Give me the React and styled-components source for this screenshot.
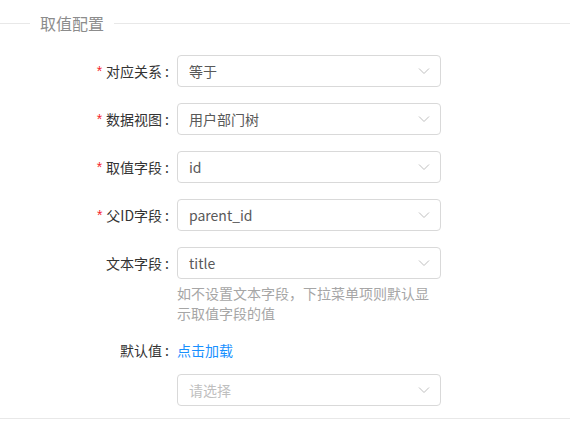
import React from "react";
import styled, { createGlobalStyle } from "styled-components";

const GlobalStyle = createGlobalStyle`
  body {
    margin: 0;
    background: #ffffff;
    font-family: "Liberation Sans", "Noto Sans CJK SC", sans-serif;
    font-size: 14px;
    color: #333;
  }
`;

const Page = styled.div`
  width: 570px;
  height: 419px;
  overflow: hidden;
  box-sizing: border-box;
  border-bottom: 1px solid #e8e8e8;
  padding-top: 12px;
`;

const Legend = styled.div`
  display: flex;
  align-items: center;
  height: 22px;
  margin-bottom: 21px;

  &::before,
  &::after {
    content: "";
    height: 1px;
    background: #e8e8e8;
  }
  &::before {
    width: 30px;
  }
  &::after {
    flex: 1;
  }
`;

const LegendText = styled.span`
  padding: 0 10px;
  font-size: 16px;
  color: #8c8c8c;
  font-family: "Noto Sans CJK SC", sans-serif;
`;

const Row = styled.div`
  display: grid;
  grid-template-columns: 177px 264px;
  margin-bottom: ${(p) => p.$gap ?? "16px"};
`;

const Label = styled.label`
  display: flex;
  justify-content: flex-end;
  align-items: center;
  height: 32px;
  font-family: "Noto Sans CJK SC", sans-serif;
  color: #333;
  white-space: nowrap;

  &::after {
    content: ":";
    margin: 0 8px 0 3px;
  }
`;

const Required = styled.span`
  color: #f5222d;
  margin-right: 4px;
  font-family: SimSun, "Liberation Sans", sans-serif;
  font-size: 14px;
`;

const Control = styled.div`
  grid-column: 2;
`;

const Select = styled.div`
  display: flex;
  align-items: center;
  justify-content: space-between;
  box-sizing: border-box;
  height: 32px;
  padding: 0 10px 0 11px;
  border: 1px solid #d9d9d9;
  border-radius: 4px;
  color: ${(p) => (p.$placeholder ? "#bfbfbf" : "#595959")};
  font-family: "Noto Sans CJK SC", sans-serif;
`;

const Help = styled.div`
  max-width: 256px;
  color: #a6a6a6;
  line-height: 20px;
  padding-top: 4px;
  margin-bottom: 11px;
  font-family: "Noto Sans CJK SC", sans-serif;
`;

const Link = styled.a`
  display: flex;
  align-items: center;
  height: 32px;
  color: #1890ff;
  text-decoration: none;
  font-family: "Noto Sans CJK SC", sans-serif;
`;

const Chevron = () => (
  <svg width="12" height="12" viewBox="0 0 12 12" fill="none">
    <path d="M1 3.5 L6 8.5 L11 3.5" stroke="#bfbfbf" strokeWidth="1" />
  </svg>
);

const Field = ({ label, required, value, placeholder }) => (
  <Row>
    <Label>
      {required && <Required>*</Required>}
      {label}
    </Label>
    <Control>
      <Select $placeholder={!value}>
        <span>{value || placeholder}</span>
        <Chevron />
      </Select>
    </Control>
  </Row>
);

export default function App() {
  return (
    <Page>
      <GlobalStyle />
      <Legend>
        <LegendText>取值配置</LegendText>
      </Legend>

      <Field label="对应关系" required value="等于" />
      <Field label="数据视图" required value="用户部门树" />
      <Field label="取值字段" required value="id" />
      <Field label="父ID字段" required value="parent_id" />

      <Row $gap="0">
        <Label>文本字段</Label>
        <Control>
          <Select>
            <span>title</span>
            <Chevron />
          </Select>
          <Help>如不设置文本字段，下拉菜单项则默认显示取值字段的值</Help>
        </Control>
      </Row>

      <Row $gap="8px">
        <Label>默认值</Label>
        <Link href="#">点击加载</Link>
      </Row>

      <Row>
        <Control>
          <Select $placeholder>
            <span>请选择</span>
            <Chevron />
          </Select>
        </Control>
      </Row>
    </Page>
  );
}
